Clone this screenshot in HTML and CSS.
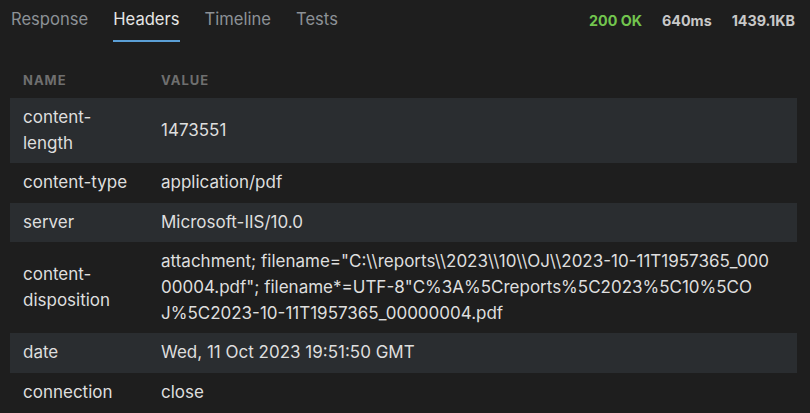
FILE: index.html
```html
<!DOCTYPE html>
<html>
<head>
<meta charset="utf-8">
<link rel="stylesheet" href="styles.css">
</head>
<body>
<div class="topbar">
  <div class="tabs">
    <span class="tab">Response</span>
    <span class="tab active">Headers</span>
    <span class="tab">Timeline</span>
    <span class="tab">Tests</span>
  </div>
  <div class="stats">
    <span class="ok">200 OK</span>
    <span>640ms</span>
    <span>1439.1KB</span>
  </div>
</div>
<table class="headers">
  <thead>
    <tr><th class="name">Name</th><th>Value</th></tr>
  </thead>
  <tbody>
    <tr><td class="name">content-length</td><td>1473551</td></tr>
    <tr><td class="name">content-type</td><td>application/pdf</td></tr>
    <tr><td class="name">server</td><td>Microsoft-IIS/10.0</td></tr>
    <tr><td class="name">content-disposition</td><td>attachment; filename="C:\\reports\\2023\\10\\OJ\\2023-10-11T1957365_00000004.pdf"; filename*=UTF-8"C%3A%5Creports%5C2023%5C10%5COJ%5C2023-10-11T1957365_00000004.pdf</td></tr>
    <tr><td class="name">date</td><td>Wed, 11 Oct 2023 19:51:50 GMT</td></tr>
    <tr><td class="name">connection</td><td>close</td></tr>
  </tbody>
</table>
</body>
</html>
```
FILE: styles.css
```css
html, body {
  margin: 0;
  padding: 0;
  background: #1e1e1e;
  font-family: Inter, "Noto Sans", sans-serif;
  color: #dcdcdc;
}
.topbar {
  display: flex;
  justify-content: space-between;
  align-items: flex-start;
  padding: 0 15px 0 11px;
}
.tabs {
  display: flex;
  gap: 25px;
}
.tab {
  font-size: 16.6px;
  line-height: 24px;
  padding: 7px 0 9px;
  color: #8c9196;
  border-bottom: 2px solid transparent;
}
.tab.active {
  color: #e6e6e6;
  border-bottom-color: #5b9fd6;
}
.stats {
  display: flex;
  gap: 20px;
  font-size: 14.3px;
  font-weight: 700;
  line-height: 20px;
  padding-top: 11px;
  color: #c8c8c8;
}
.stats .ok {
  color: #72c54e;
}
.headers {
  margin: 20px 0 0 10px;
  width: 787px;
  border-collapse: collapse;
  table-layout: fixed;
}
.headers th {
  text-align: left;
  font-size: 13px;
  font-weight: 700;
  text-transform: uppercase;
  letter-spacing: 1px;
  color: #6f6f6f;
  height: 36px;
  padding: 0 13px;
  line-height: 16px;
}
.headers th.name,
.headers td.name {
  width: 112px;
}
.headers td {
  font-size: 17px;
  line-height: 25.6px;
  padding: 7px 23px 7px 13px;
  vertical-align: middle;
  word-break: break-all;
  color: #dedede;
}
.headers td.name {
  word-break: normal;
  padding-right: 13px;
}
.headers tbody tr:nth-child(odd) {
  background: #2a2d30;
}
```
